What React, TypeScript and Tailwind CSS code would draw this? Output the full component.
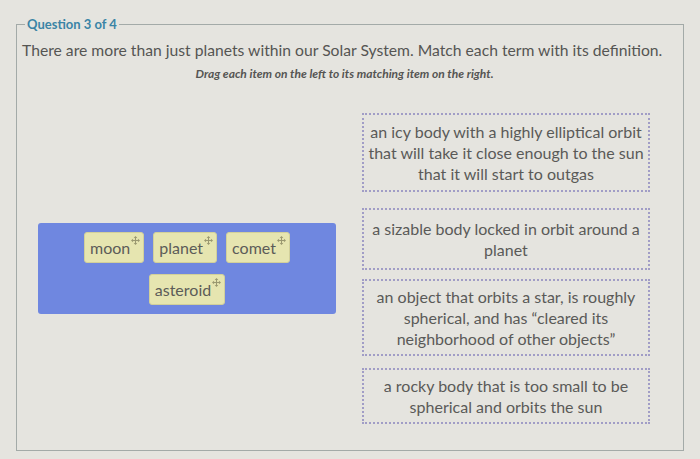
import React from "react";

function MoveIcon() {
  return (
    <svg width="9" height="9" viewBox="0 0 10 10" className="absolute top-[3px] right-[3px]" fill="#9a9870">
      <path d="M5 0 L7 2.3 H5.6 V4.4 H7.7 V3 L10 5 L7.7 7 V5.6 H5.6 V7.7 H7 L5 10 L3 7.7 H4.4 V5.6 H2.3 V7 L0 5 L2.3 3 V4.4 H4.4 V2.3 H3 Z" />
    </svg>
  );
}

function Tile({ label }: { label: string }) {
  return (
    <div className="relative h-[31px] pl-[5px] pr-[13px] flex items-center bg-[#e6e5b0] border border-[#d2d09a] rounded-[3px] text-[16px] text-[#5c5c58]">
      {label}
      <MoveIcon />
    </div>
  );
}

function Target({ children, cls }: { children: React.ReactNode; cls: string }) {
  return (
    <div className={"w-[288px] border-2 border-dotted border-[#a19dc6] text-center text-[16px] leading-[21px] text-[#5a5a58] px-[3px] " + cls}>
      {children}
    </div>
  );
}

export default function App() {
  return (
    <div className="w-[700px] h-[459px] overflow-hidden bg-[#e5e4df] pt-[17px] px-[16px]" style={{ fontFamily: "Lato, 'Open Sans', sans-serif" }}>
      <fieldset className="border border-[#a3aaa8] h-[434px] pl-[5px] pr-[6px]">
        <legend className="ml-[3px] px-[2px] text-[13px] font-bold text-[#3a84a6] leading-[14px]">Question 3 of 4</legend>
        <p className="mt-[8px] text-[15.7px] leading-[22px] text-[#555553] whitespace-nowrap">
          There are more than just planets within our Solar System. Match each term with its definition.
        </p>
        <p className="mt-[5px] text-center text-[12px] font-bold italic text-[#555553] leading-[15px] pr-[10px]">
          Drag each item on the left to its matching item on the right.
        </p>
        <div className="flex items-center mt-[32px]">
          <div className="ml-[16px] w-[298px] h-[91px] bg-[#6f87e0] rounded-[3px] flex flex-col items-center pt-[9px] gap-[11px]">
            <div className="flex gap-[9px]">
              <Tile label="moon" />
              <Tile label="planet" />
              <Tile label="comet" />
            </div>
            <div className="flex">
              <Tile label="asteroid" />
            </div>
          </div>
          <div className="ml-[26px] flex flex-col">
            <Target cls="py-[6px]">
              an icy body with a highly elliptical orbit that will take it close enough to the sun that it will start to outgas
            </Target>
            <Target cls="py-[8px] mt-[16px]">
              a sizable body locked in orbit around a planet
            </Target>
            <Target cls="py-[5px] mt-[9px]">
              an object that orbits a star, is roughly spherical, and has “cleared its neighborhood of other objects”
            </Target>
            <Target cls="py-[5px] mt-[12px]">
              a rocky body that is too small to be spherical and orbits the sun
            </Target>
          </div>
        </div>
      </fieldset>
    </div>
  );
}
